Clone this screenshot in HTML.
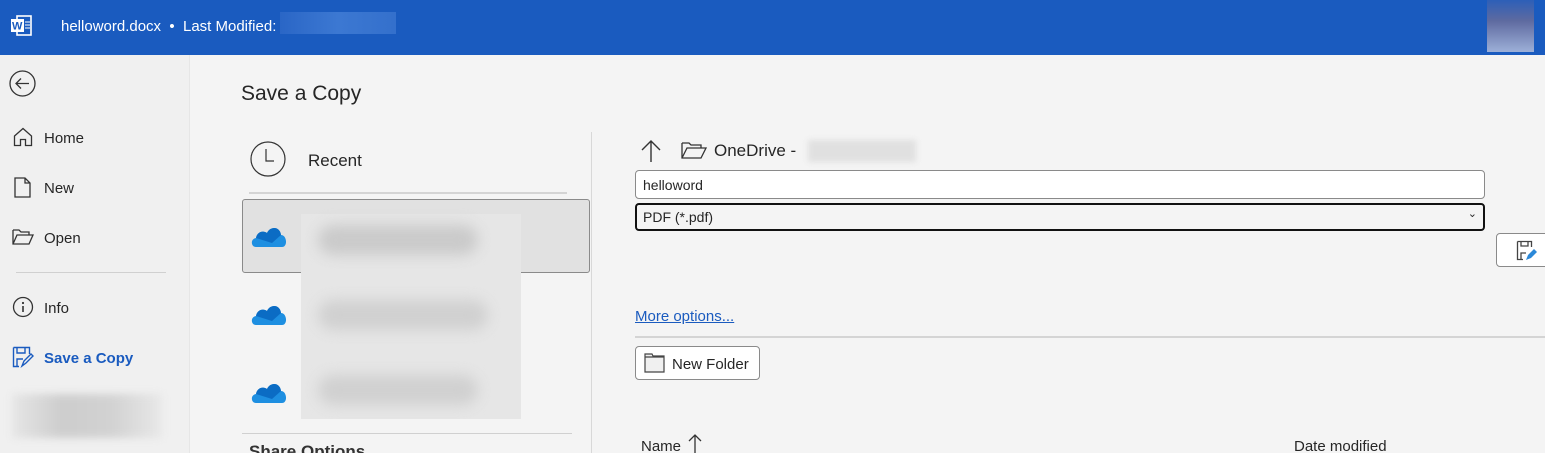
<!DOCTYPE html>
<html><head><style>
*{margin:0;padding:0;box-sizing:border-box}
html,body{width:1545px;height:453px;overflow:hidden}
body{background:#f4f4f4;font-family:"Segoe UI","Liberation Sans",sans-serif;color:#262626;position:relative}
.a{position:absolute}
.hdr{left:0;top:0;width:1545px;height:55px;background:#1a5bbf}
.side{left:0;top:55px;width:190px;height:398px;background:#f0f0f0;border-right:1px solid #e6e6e6}
.nav{left:44px;font-size:15px;color:#262626}
.blur{background:linear-gradient(90deg,#ddd,#cfcfcf,#d8d8d8,#e2e2e2);filter:blur(4px)}
</style></head><body>
<div class="a hdr"></div>
<svg class="a" style="left:10px;top:14px" width="24" height="24" viewBox="0 0 24 24"><rect x="7" y="2" width="14" height="19" fill="none" stroke="#fff" stroke-width="1.6"/><rect x="1" y="5" width="13" height="13" fill="#fff"/><text x="2" y="15.5" font-size="11" font-weight="bold" fill="#1a5bbf" font-family="Liberation Sans">W</text><path d="M15 8h5M15 11h5M15 14h5" stroke="#fff"/></svg>
<div class="a" style="left:61px;top:18px;color:#fff;font-size:15px">helloword.docx &nbsp;•&nbsp; Last Modified:</div>
<div class="a" style="left:280px;top:12px;width:116px;height:22px;background:linear-gradient(90deg,#2a66c6,#3c78d2,#3470cc)"></div>
<div class="a" style="left:1487px;top:0;width:47px;height:52px;background:linear-gradient(#2d5fb8,#5e6aa0 40%,#9db0d8)"></div>
<div class="a side"></div>
<svg class="a" style="left:9px;top:70px" width="27" height="27" viewBox="0 0 27 27"><circle cx="13.5" cy="13.5" r="12.5" fill="none" stroke="#333" stroke-width="1.3"/><path d="M20 13.5H7M12 8.5l-5 5 5 5" fill="none" stroke="#333" stroke-width="1.3"/></svg>
<svg class="a" style="left:13px;top:127px" width="20" height="20" viewBox="0 0 20 20"><path d="M1.5 9L10 1.5 18.5 9V18.5H12.5V12.5H7.5V18.5H1.5Z" fill="none" stroke="#333" stroke-width="1.3"/></svg>
<div class="a nav" style="top:130px">Home</div>
<svg class="a" style="left:14px;top:177px" width="18" height="21" viewBox="0 0 18 21"><path d="M1 1H11L16 6V20H1Z M11 1V6H16" fill="none" stroke="#333" stroke-width="1.3"/></svg>
<div class="a nav" style="top:180px">New</div>
<svg class="a" style="left:12px;top:228px" width="22" height="18" viewBox="0 0 22 18"><path d="M1 2H7L9 4H17V7M1 2V16H17L21 7H5L1 16" fill="none" stroke="#333" stroke-width="1.3"/></svg>
<div class="a nav" style="top:230px">Open</div>
<div class="a" style="left:16px;top:272px;width:150px;height:1px;background:#d0d0d0"></div>
<svg class="a" style="left:12px;top:296px" width="22" height="22" viewBox="0 0 22 22"><circle cx="11" cy="11" r="9.5" fill="none" stroke="#333" stroke-width="1.3"/><path d="M11 10V16" stroke="#333" stroke-width="1.6"/><circle cx="11" cy="7" r="1.1" fill="#333"/></svg>
<div class="a nav" style="top:300px">Info</div>
<svg class="a" style="left:12px;top:346px" width="22" height="22" viewBox="0 0 22 22"><path d="M1.5 1.5H17.5V8M1.5 1.5V20.5H7M5 1.5V7H13V1.5M5 20.5V13H11" fill="none" stroke="#1a5bbf" stroke-width="1.4"/><path d="M10 20L12 15L19 8L21 10L14 17Z" fill="none" stroke="#1a5bbf" stroke-width="1.4"/></svg>
<div class="a nav" style="top:350px;color:#1a5bbf;font-weight:bold">Save a Copy</div>
<div class="a blur" style="left:12px;top:394px;width:150px;height:44px;background:linear-gradient(90deg,#e6e6e6,#cdcdcd,#d2d2d2,#e8e8e8)"></div>
<div class="a" style="left:241px;top:82px;font-size:21px;color:#262626">Save a Copy</div>
<svg class="a" style="left:250px;top:141px" width="36" height="36" viewBox="0 0 36 36"><circle cx="18" cy="18" r="17" fill="none" stroke="#333" stroke-width="1.2"/><path d="M16 8V20H24" fill="none" stroke="#333" stroke-width="1.2"/></svg>
<div class="a" style="left:308px;top:151px;font-size:17px">Recent</div>
<div class="a" style="left:249px;top:192px;width:318px;height:2px;background:#d4d4d4"></div>
<div class="a" style="left:242px;top:199px;width:348px;height:74px;background:#e1e1e1;border:1px solid #8a8a8a;border-radius:3px"></div>
<div class="a" style="left:301px;top:214px;width:220px;height:205px;background:#e6e6e6"></div>
<div class="a blur" style="left:318px;top:225px;width:160px;height:30px;background:#cacaca;border-radius:15px;filter:blur(7px)"></div>
<div class="a blur" style="left:318px;top:300px;width:170px;height:30px;background:#d0d0d0;border-radius:15px;filter:blur(7px)"></div>
<div class="a blur" style="left:318px;top:375px;width:160px;height:30px;background:#d0d0d0;border-radius:15px;filter:blur(7px)"></div>
<svg class="a" style="left:250px;top:223px" width="38" height="26" viewBox="0 0 38 26"><path d="M6 24C1 24 0 16 6 15C7 9 13 7 17 10C20 3 30 3 31 12C37 12 38 24 32 24Z" fill="#1e8fe1"/><path d="M6 15C7 9 13 7 17 10C20 3 30 3 31 12L22 20Z" fill="#0b6cc4"/></svg>
<svg class="a" style="left:250px;top:301px" width="38" height="26" viewBox="0 0 38 26"><path d="M6 24C1 24 0 16 6 15C7 9 13 7 17 10C20 3 30 3 31 12C37 12 38 24 32 24Z" fill="#1e8fe1"/><path d="M6 15C7 9 13 7 17 10C20 3 30 3 31 12L22 20Z" fill="#0b6cc4"/></svg>
<svg class="a" style="left:250px;top:379px" width="38" height="26" viewBox="0 0 38 26"><path d="M6 24C1 24 0 16 6 15C7 9 13 7 17 10C20 3 30 3 31 12C37 12 38 24 32 24Z" fill="#1e8fe1"/><path d="M6 15C7 9 13 7 17 10C20 3 30 3 31 12L22 20Z" fill="#0b6cc4"/></svg>
<div class="a" style="left:242px;top:433px;width:330px;height:1px;background:#d0d0d0"></div>
<div class="a" style="left:249px;top:442px;font-size:17px;font-weight:bold;color:#333">Share Options</div>
<div class="a" style="left:591px;top:132px;width:1px;height:321px;background:#d8d8d8"></div>
<svg class="a" style="left:640px;top:139px" width="22" height="24" viewBox="0 0 22 24"><path d="M11 23V2M2 11L11 2L20 11" fill="none" stroke="#333" stroke-width="1.4"/></svg>
<svg class="a" style="left:681px;top:141px" width="26" height="18" viewBox="0 0 26 18"><path d="M1 2H8L10 4H20V7M1 2V17H20L25 7H6L1 17" fill="none" stroke="#333" stroke-width="1.3"/></svg>
<div class="a" style="left:714px;top:141px;font-size:17px">OneDrive - </div>
<div class="a blur" style="left:808px;top:140px;width:108px;height:22px;background:#e0e0e0;filter:blur(3px)"></div>
<div class="a" style="left:635px;top:170px;width:850px;height:29px;background:#fff;border:1px solid #8a8a8a;border-radius:4px;font-size:14px;padding:6px 0 0 7px">helloword</div>
<div class="a" style="left:635px;top:203px;width:850px;height:28px;background:#f4f4f4;border:2px solid #111;border-radius:4px;font-size:14px;padding:4px 0 0 6px">PDF (*.pdf)<span style="position:absolute;right:6px;top:2px;font-size:11px">&#8964;</span></div>
<div class="a" style="left:1496px;top:233px;width:60px;height:34px;background:#fff;border:1px solid #8a8a8a;border-radius:4px"></div>
<svg class="a" style="left:1516px;top:240px" width="22" height="22" viewBox="0 0 22 22"><path d="M1.5 1.5H15.5V7M1.5 1.5V19.5H7M5 1.5V6H12V1.5M5 19.5V13H10" fill="none" stroke="#444" stroke-width="1.3"/><path d="M10 20L12 15L18 9L21 12L15 18Z" fill="#2b88d8"/></svg>
<div class="a" style="left:635px;top:308px;font-size:15px;color:#1a5bbf;text-decoration:underline">More options...</div>
<div class="a" style="left:635px;top:336px;width:910px;height:2px;background:#d4d4d4"></div>
<div class="a" style="left:635px;top:346px;width:125px;height:34px;background:#fff;border:1px solid #8a8a8a;border-radius:4px"></div>
<svg class="a" style="left:644px;top:353px" width="22" height="20" viewBox="0 0 22 20"><path d="M1 1H8L9 3H20V19H1Z M1 4H20" fill="#f0f0f0" stroke="#444" stroke-width="1.2"/></svg>
<div class="a" style="left:672px;top:356px;font-size:15px">New Folder</div>
<div class="a" style="left:641px;top:438px;font-size:15px">Name</div>
<svg class="a" style="left:688px;top:433px" width="14" height="20" viewBox="0 0 14 20"><path d="M7 20V2M1 8L7 2L13 8" fill="none" stroke="#333" stroke-width="1.3"/></svg>
<div class="a" style="left:1294px;top:438px;font-size:15px">Date modified</div>
</body></html>
